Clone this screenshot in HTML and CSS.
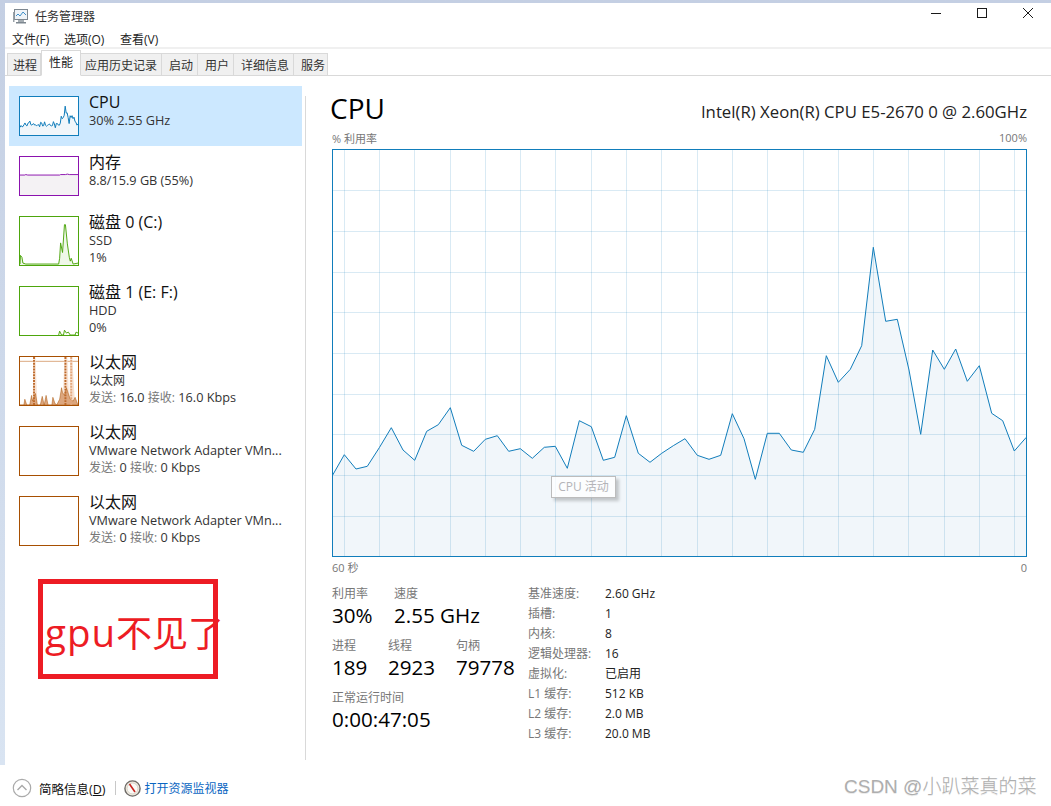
FILE: index.html
```html
<!DOCTYPE html>
<html lang="zh-CN">
<head>
<meta charset="utf-8">
<title>任务管理器</title>
<link rel="stylesheet" href="styles.css">
</head>
<body>
<div class="root">
  <div class="frame">
    <div class="window">
      <header class="titlebar">
        <svg class="app-icon" width="16" height="15" viewBox="0 0 16 15">
          <rect x="1.5" y="0.5" width="13" height="10" fill="#eef3f8" stroke="#7d8790"/>
          <polyline points="3,7 5,5 7,7 10,3 13,6" fill="none" stroke="#3f8fc9" stroke-width="1"/>
          <rect x="5" y="11" width="6" height="2" fill="#a5adb3"/>
          <rect x="3" y="13" width="10" height="1.5" fill="#7d8790"/>
          <rect x="0" y="3" width="1.5" height="10" fill="#9aa2a8"/>
        </svg>
        <span class="app-title">任务管理器</span>
        <div class="win-controls">
          <svg class="win-btn" width="12" height="12" viewBox="0 0 12 12"><line x1="1" y1="6.5" x2="11" y2="6.5" stroke="#1a1a1a"/></svg>
          <svg class="win-btn" width="12" height="12" viewBox="0 0 12 12"><rect x="1.5" y="1.5" width="9" height="9" fill="none" stroke="#1a1a1a"/></svg>
          <svg class="win-btn" width="12" height="12" viewBox="0 0 12 12"><path d="M1 1 L11 11 M11 1 L1 11" stroke="#1a1a1a" fill="none"/></svg>
        </div>
      </header>
      <nav class="menubar">
        <span class="menu-file">文件(F)</span>
        <span class="menu-opt">选项(O)</span>
        <span>查看(V)</span>
      </nav>
      <div class="tabs">
        <span class="tab tab-first">进程</span>
        <span class="tab tab-active">性能</span>
        <span class="tab tab-6">应用历史记录</span>
        <span class="tab tab-2b">启动</span>
        <span class="tab tab-2b">用户</span>
        <span class="tab tab-4">详细信息</span>
        <span class="tab tab-2c">服务</span>
      </div>
      <div class="main">
        <aside class="sidebar">
          <div class="item item-selected">
            <svg class="thumb thumb-40 cpu" viewBox="332 149 695 408" preserveAspectRatio="none">
              <use href="#cpu-fill" class="mini-fill-cpu"/>
              <use href="#cpu-line"/>
            </svg>
            <div class="item-text">
              <div class="item-title">CPU</div>
              <div class="item-sub">30% 2.55 GHz</div>
            </div>
          </div>
          <div class="item">
            <svg class="thumb thumb-40 mem" viewBox="0 0 60 40" preserveAspectRatio="none">
              <polygon class="mem-fill" points="0,19 5,19 6,18.5 8,19 41,19 42,18.5 47,18.5 49,18 51,18.5 60,18.5 60,40 0,40"/>
              <polyline class="mem-line" points="0,19 5,19 6,18.5 8,19 41,19 42,18.5 47,18.5 49,18 51,18.5 60,18.5"/>
            </svg>
            <div class="item-text">
              <div class="item-title">内存</div>
              <div class="item-sub">8.8/15.9 GB (55%)</div>
            </div>
          </div>
          <div class="item">
            <svg class="thumb thumb-50 disk" viewBox="0 0 60 50" preserveAspectRatio="none">
              <polygon class="disk-fill" points="0,49 0.5,40 2,42 3,48 6,49 40,49 41,43 42,27 44,37 46,8 47,8 49,28 51,42 52,46 53,43 55,49 60,48 60,50 0,50"/>
              <polyline class="disk-line" points="0,49 0.5,40 2,42 3,48 6,49 40,49 41,43 42,27 44,37 46,8 47,8 49,28 51,42 52,46 53,43 55,49 60,48"/>
            </svg>
            <div class="item-text">
              <div class="item-title">磁盘 0 (C:)</div>
              <div class="item-sub">SSD</div>
              <div class="item-sub">1%</div>
            </div>
          </div>
          <div class="item">
            <svg class="thumb thumb-50 disk" viewBox="0 0 60 50" preserveAspectRatio="none">
              <polyline class="disk-line" points="40,50 41,46 43,50 45,50 46,45 48,48 50,47 52,50 57,50 58,47 60,48"/>
            </svg>
            <div class="item-text">
              <div class="item-title">磁盘 1 (E: F:)</div>
              <div class="item-sub">HDD</div>
              <div class="item-sub">0%</div>
            </div>
          </div>
          <div class="item">
            <svg class="thumb thumb-50 net" viewBox="0 0 60 50" preserveAspectRatio="none">
              <line class="net-top" x1="0" y1="4.5" x2="60" y2="4.5"/>
              <polygon class="net-pale" points="13,50 14,0 16,0 18,50"/>
              <polygon class="net-pale" points="44,50 46,0 49,0 51,50"/>
              <polygon class="net-pale" points="51,50 52,0 54,0 57,50"/>
              <polygon class="net-fill" points="0,50 4,50 5,44 7,50 10,50 12,40 13,46 15,40 16,38 18,50 21,50 23,41 25,50 27,40 29,50 33,50 34,42 36,48 38,50 41,44 43,32 44,37 46,40 48,32 50,38 52,44 55,46 57,42 60,50"/>
              <polyline class="net-dash" points="14.5,50 14.5,0"/>
              <polyline class="net-dash" points="47,50 47,0"/>
              <polyline class="net-dash-light" points="53,50 53,0"/>
            </svg>
            <div class="item-text">
              <div class="item-title">以太网</div>
              <div class="item-sub"><span class="cjk">以太网</span></div>
              <div class="item-sub"><span class="muted">发送:</span> 16.0 <span class="muted">接收:</span> 16.0 Kbps</div>
            </div>
          </div>
          <div class="item">
            <div class="thumb thumb-50 net-empty"></div>
            <div class="item-text">
              <div class="item-title">以太网</div>
              <div class="item-sub">VMware Network Adapter VMn...</div>
              <div class="item-sub"><span class="muted">发送:</span> 0 <span class="muted">接收:</span> 0 Kbps</div>
            </div>
          </div>
          <div class="item">
            <div class="thumb thumb-50 net-empty"></div>
            <div class="item-text">
              <div class="item-title">以太网</div>
              <div class="item-sub">VMware Network Adapter VMn...</div>
              <div class="item-sub"><span class="muted">发送:</span> 0 <span class="muted">接收:</span> 0 Kbps</div>
            </div>
          </div>
        </aside>
        <div class="divider"></div>
        <section class="panel">
          <div class="panel-head">
            <h1 class="panel-title">CPU</h1>
            <div class="cpu-model">Intel(R) Xeon(R) CPU E5-2670 0 @ 2.60GHz</div>
          </div>
          <div class="axis axis-top"><span>% 利用率</span><span>100%</span></div>
          <div class="chart">
            <svg class="chart-svg" width="695" height="408" viewBox="332 149 695 408">
              <polygon id="cpu-fill" class="chart-fill" points="332.7,475 344.3,454.7 356,469 367.3,466.3 379.3,447.7 391.3,427.7 403,450 414.7,460.3 426.7,431.3 438.3,424.7 450.3,407.7 461.7,445.3 473.7,451.3 485.3,439.3 497.3,435.7 508.7,451.3 520.3,448.7 532.3,458.3 544.3,447.3 555.3,446.3 567.3,468.3 579.3,420.7 591.3,426.7 603.3,460.3 614.7,457.3 626.3,415.7 638.3,453.3 650,462.3 661.7,453.3 673.3,445.7 685,438.7 697.3,455.3 709,459.3 720.7,455.3 732.3,413.7 744,438.7 755.3,479.3 767.3,433.3 779.3,433.3 791.3,450 803.3,452.3 814.7,429.3 826.3,355.7 838.3,382.3 850.3,369.3 861.7,345.7 873.3,247.3 885.7,321.3 897.3,319.3 909,370 920.7,434.3 932.7,350 944.3,369.3 955.7,349 967.3,381.3 979.3,365.7 991.7,413.3 1002.7,420.7 1014.3,451 1026.3,437.3 1026.3,556 332.7,556"/>
              <path class="chart-grid" d="M344.5 150V556M379.5 150V556M414.5 150V556M450.5 150V556M485.5 150V556M520.5 150V556M555.5 150V556M591.5 150V556M626.5 150V556M661.5 150V556M697.5 150V556M732.5 150V556M767.5 150V556M803.5 150V556M838.5 150V556M873.5 150V556M908.5 150V556M944.5 150V556M979.5 150V556M1014.5 150V556M333 190.5H1026M333 231.5H1026M333 272.5H1026M333 312.5H1026M333 353.5H1026M333 394.5H1026M333 434.5H1026M333 475.5H1026M333 516.5H1026"/>
              <polyline id="cpu-line" class="chart-line" points="332.7,475 344.3,454.7 356,469 367.3,466.3 379.3,447.7 391.3,427.7 403,450 414.7,460.3 426.7,431.3 438.3,424.7 450.3,407.7 461.7,445.3 473.7,451.3 485.3,439.3 497.3,435.7 508.7,451.3 520.3,448.7 532.3,458.3 544.3,447.3 555.3,446.3 567.3,468.3 579.3,420.7 591.3,426.7 603.3,460.3 614.7,457.3 626.3,415.7 638.3,453.3 650,462.3 661.7,453.3 673.3,445.7 685,438.7 697.3,455.3 709,459.3 720.7,455.3 732.3,413.7 744,438.7 755.3,479.3 767.3,433.3 779.3,433.3 791.3,450 803.3,452.3 814.7,429.3 826.3,355.7 838.3,382.3 850.3,369.3 861.7,345.7 873.3,247.3 885.7,321.3 897.3,319.3 909,370 920.7,434.3 932.7,350 944.3,369.3 955.7,349 967.3,381.3 979.3,365.7 991.7,413.3 1002.7,420.7 1014.3,451 1026.3,437.3"/>
              <rect class="chart-border" x="332.5" y="149.5" width="694" height="407"/>
            </svg>
            <div class="chart-tip">CPU 活动</div>
          </div>
          <div class="axis axis-bottom"><span>60 秒</span><span>0</span></div>
          <div class="stats">
            <div class="stats-left">
              <div class="stat-row">
                <div class="stat w-62"><div class="stat-label">利用率</div><div class="stat-value">30%</div></div>
                <div class="stat"><div class="stat-label">速度</div><div class="stat-value">2.55 GHz</div></div>
              </div>
              <div class="stat-row">
                <div class="stat w-56"><div class="stat-label">进程</div><div class="stat-value">189</div></div>
                <div class="stat w-68"><div class="stat-label">线程</div><div class="stat-value">2923</div></div>
                <div class="stat"><div class="stat-label">句柄</div><div class="stat-value">79778</div></div>
              </div>
              <div class="stat-row">
                <div class="stat"><div class="stat-label">正常运行时间</div><div class="stat-value">0:00:47:05</div></div>
              </div>
            </div>
            <dl class="spec">
              <dt>基准速度:</dt><dd>2.60 GHz</dd>
              <dt>插槽:</dt><dd>1</dd>
              <dt>内核:</dt><dd>8</dd>
              <dt>逻辑处理器:</dt><dd>16</dd>
              <dt>虚拟化:</dt><dd>已启用</dd>
              <dt>L1 缓存:</dt><dd>512 KB</dd>
              <dt>L2 缓存:</dt><dd>2.0 MB</dd>
              <dt>L3 缓存:</dt><dd>20.0 MB</dd>
            </dl>
          </div>
        </section>
      </div>
    </div>
  </div>
  <footer class="footer">
    <svg class="chev" width="20" height="20" viewBox="0 0 20 20">
      <circle cx="10" cy="10" r="8.7" fill="#fff" stroke="#aaaaaa" stroke-width="1.2"/>
      <polyline points="5.5,12 10,7.5 14.5,12" fill="none" stroke="#a8a8a8" stroke-width="1.4"/>
    </svg>
    <span class="brief">简略信息(<u>D</u>)</span>
    <span class="foot-sep"></span>
    <svg class="monitor-icon" width="17" height="17" viewBox="0 0 17 17">
      <circle cx="8.5" cy="8.5" r="7.6" fill="#efe9df" stroke="#6d6a66" stroke-width="1.4"/>
      <circle cx="8.5" cy="8.5" r="5.4" fill="#fbfaf7" stroke="#c8c2b6" stroke-width="0.6"/>
      <line x1="5.5" y1="4" x2="11" y2="12" stroke="#c8231e" stroke-width="1.6"/>
    </svg>
    <span class="monitor-link">打开资源监视器</span>
  </footer>
  <div class="note-box"></div>
  <div class="note-text"><span class="note-latin">gpu</span>不见了</div>
  <div class="watermark">CSDN @小趴菜真的菜</div>
</div>
</body>
</html>
```
FILE: styles.css
```css
* { box-sizing: border-box; }
html, body { margin: 0; padding: 0; }
body {
  width: 1051px;
  height: 806px;
  overflow: hidden;
  background: #fff;
  color: #000;
  font-family: "Open Sans", "Noto Sans CJK SC", sans-serif;
  font-size: 12px;
}
.root { position: relative; width: 1051px; height: 806px; display: flex; flex-direction: column; }
.frame {
  height: 765px;
  padding: 3px 0 0 5px;
  background: linear-gradient(180deg, #c4cfe3 0%, #d9e4f2 100%);
}
.window { height: 762px; background: #fff; display: flex; flex-direction: column; }

.titlebar { height: 24px; display: flex; align-items: center; padding-left: 8px; flex: none; }
.app-icon { flex: none; margin-top: 2px; }
.app-title { margin-left: 6px; font-size: 12px; color: #333; margin-top: 1px; }
.win-controls { margin-left: auto; display: flex; align-items: center; gap: 34px; padding-right: 17px; margin-top: -4px; }
.win-btn { display: block; }

.menubar { height: 20px; display: flex; align-items: center; padding-left: 7px; flex: none; font-size: 12px; color: #222; padding-top: 4px; }
.menu-file { width: 52px; }
.menu-opt { width: 56px; }

.tabs {
  height: 29px;
  flex: none;
  border-top: 2px solid #f0f0f0;
  border-bottom: 1px solid #d9d9d9;
  display: flex;
  align-items: flex-end;
  padding-left: 2px;
  font-size: 12px;
}
.tab {
  height: 23px;
  margin-bottom: -1px;
  background: #f0f0f0;
  border: 1px solid #d9d9d9;
  border-left-width: 0;
  display: flex;
  align-items: center;
  padding-left: 7px;
  color: #333;
}
.tab-first { width: 34px; border-left-width: 1px; padding-left: 5px; }
.tab-active { width: 40px; height: 26px; background: #fff; border-left-width: 1px; border-bottom-color: #fff; padding-left: 7px; padding-bottom: 3px; color: #222; }
.tab-6 { width: 81px; padding-left: 4px; }
.tab-2b { width: 36px; }
.tab-4 { width: 60px; }
.tab-2c { width: 34px; }

.main { flex: 1; display: flex; min-height: 0; }
.sidebar { width: 300px; flex: none; padding: 10px 3px 0 4px; }
.divider { width: 1px; flex: none; margin: 20px 0 5px; background: #d9d9d9; }

.item { display: flex; gap: 10px; padding: 6px 10px 10px; }
.item-selected { background: #cce8ff; }
.thumb { display: block; flex: none; width: 60px; margin-top: 4px; border: 1px solid; background: #fff; }
.thumb-40 { height: 40px; }
.thumb-50 { height: 50px; }
.cpu { border-color: #117dbb; }
.mem { border-color: #8b12ae; }
.disk { border-color: #4da60c; }
.net { border-color: #a74f01; }
.net-empty { border-color: #a74f01; }

.mini-fill-cpu { fill: #f1f6fa; }
.mem-fill { fill: #f4f2f4; }
.mem-line { fill: none; stroke: #8b12ae; stroke-width: 1; }
.disk-fill { fill: #eff7e9; }
.disk-line { fill: none; stroke: #4da60c; stroke-width: 1; }
.net-top { stroke: #dba77c; stroke-width: 1; }
.net-pale { fill: #f8e2d2; }
.net-fill { fill: #dca67e; stroke: #a74f01; stroke-width: 0.5; }
.net-dash { fill: none; stroke: #bd6a2c; stroke-width: 2; stroke-dasharray: 2 1; }
.net-dash-light { fill: none; stroke: #e2a67c; stroke-width: 2; stroke-dasharray: 2 1; }

.item-text { min-width: 0; }
.item-title { height: 20px; line-height: 20px; font-size: 16px; color: #111; white-space: nowrap; }
.item-sub { height: 17px; line-height: 17px; font-size: 12.7px; color: #333; white-space: nowrap; }
.muted { color: #777; font-size: 12px; }
.cjk { font-size: 12px; }

.panel { flex: 1; min-width: 0; padding: 14px 24px 0 25px; }
.panel-head { height: 38px; display: flex; justify-content: space-between; align-items: center; }
.panel-title { margin: 0 0 3px -1px; font-size: 28px; font-weight: 400; line-height: 34px; }
.cpu-model { font-size: 16.75px; color: #222; margin-top: 4px; white-space: nowrap; }
.axis { display: flex; justify-content: space-between; padding-left: 1px; font-size: 11px; color: #777; align-items: center; }
.axis-top { height: 21px; padding-bottom: 2px; }
.axis-bottom { height: 20px; }

.chart { position: relative; width: 695px; height: 408px; margin-left: 1px; }
.chart-svg { display: block; }
.chart-fill { fill: #f1f6fa; }
.chart-grid { fill: none; stroke: #117dbb; stroke-opacity: 0.16; stroke-width: 1; }
.chart-line { fill: none; stroke: #117dbb; stroke-width: 1; vector-effect: non-scaling-stroke; }
.chart-border { fill: none; stroke: #117dbb; stroke-width: 1; }
.chart-tip {
  position: absolute;
  left: 219px;
  top: 327px;
  width: 65px;
  height: 22px;
  border: 1px solid #bcbcbc;
  background: rgba(255, 255, 255, 0.75);
  box-shadow: 3px 3px 3px rgba(0, 0, 0, 0.2);
  font-size: 12px;
  line-height: 19px;
  text-align: center;
  color: #b4b4b8;
}

.stats { display: flex; margin-left: 1px; margin-top: 7px; }
.stats-left { width: 196px; flex: none; padding-top: 2px; }
.stat-row { display: flex; height: 52px; }
.w-62 { width: 62px; }
.w-56 { width: 56px; }
.w-68 { width: 68px; }
.stat-label { height: 16px; line-height: 16px; font-size: 12px; color: #777; white-space: nowrap; }
.stat-value { height: 28px; line-height: 26px; font-size: 20.6px; color: #000; white-space: nowrap; }

.spec { margin: 0; display: grid; grid-template-columns: 77px auto; grid-auto-rows: 20px; font-size: 12px; line-height: 20px; }
.spec dt { color: #777; white-space: nowrap; }
.spec dd { margin: 0; color: #222; white-space: nowrap; }

.footer { height: 41px; flex: none; background: #fff; display: flex; align-items: center; padding-left: 12px; padding-top: 5px; }
.chev { flex: none; }
.brief { margin-left: 7px; font-size: 12.5px; color: #111; }
.foot-sep { width: 1px; height: 14px; background: #c8c8c8; margin-left: 10px; }
.monitor-icon { flex: none; margin-left: 8px; }
.monitor-link { margin-left: 3px; font-size: 12px; color: #0a66c2; }

.note-box { position: absolute; left: 38px; top: 579px; width: 180px; height: 100px; border: 5px solid #ed1c24; }
.note-text {
  position: absolute;
  left: 45px;
  top: 607px;
  font-size: 36px;
  line-height: 50px;
  color: #ed1c24;
  white-space: nowrap;
}
.note-latin { font-size: 38.5px; letter-spacing: 1px; }
.watermark {
  position: absolute;
  left: 844px;
  top: 774px;
  font-family: "Liberation Sans", "Noto Sans CJK SC", sans-serif;
  font-size: 19px;
  font-weight: 300;
  line-height: 25px;
  color: #aeaeae;
  text-shadow: 0 1px 0 #ececec;
  white-space: nowrap;
}
```
